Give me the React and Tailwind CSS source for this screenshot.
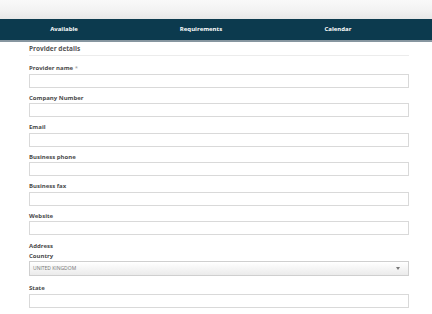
export default function App() {
  const fields1 = ["Company Number", "Email", "Business phone", "Business fax", "Website"];
  const font = { fontFamily: '"Open Sans", "Noto Sans", sans-serif' };
  return (
    <div className="w-[432px] h-[314px] bg-white overflow-hidden" style={font}>
      <div className="h-[19px] bg-gradient-to-b from-[#f9f9f9] via-[#f3f3f3] to-[#e7e7e7]" />
      <div className="h-[23px] bg-[#0c3a4e] flex items-center border-b-[2px] border-[#8796a0]">
        <div className="w-[128px] text-center text-white text-[6px] font-bold">Available</div>
        <div className="w-[146px] text-center text-white text-[6px] font-bold">Requirements</div>
        <div className="w-[128px] text-center text-white text-[6px] font-bold">Calendar</div>
      </div>
      <div className="ml-[29px] w-[380px]">
        <div className="h-[14px] flex items-center border-b border-[#ececec] text-[6.5px] font-bold text-[#555] leading-none pt-[1px]">
          Provider details
        </div>
        <div className="mt-[8px] flex flex-col gap-[6px]">
          <div>
            <div className="text-[6px] font-bold text-[#4a4a4a] leading-[9.5px]">
              Provider name <span className="text-[#999] font-normal">*</span>
            </div>
            <div className="h-[14px] border border-[#d9d9d9] bg-white" />
          </div>
          {fields1.map((f) => (
            <div key={f}>
              <div className="text-[6px] font-bold text-[#4a4a4a] leading-[9.5px]">{f}</div>
              <div className="h-[14px] border border-[#d9d9d9] bg-white" />
            </div>
          ))}
          <div>
            <div className="text-[6px] font-bold text-[#4a4a4a] leading-[10px]">Address</div>
            <div className="text-[6px] font-bold text-[#4a4a4a] leading-[10px]">Country</div>
            <div className="h-[15px] border border-[#cfcfcf] bg-gradient-to-b from-[#ffffff] to-[#ebebeb] flex items-center justify-between px-[3px]">
              <span className="text-[5px] text-[#777] uppercase">United Kingdom</span>
              <svg width="4" height="3" viewBox="0 0 4 3" className="mr-[5px]">
                <path d="M0 0 L4 0 L2 3 Z" fill="#777" />
              </svg>
            </div>
          </div>
          <div className="mt-[2px]">
            <div className="text-[6px] font-bold text-[#4a4a4a] leading-[9.5px]">State</div>
            <div className="h-[14px] border border-[#d9d9d9] bg-white" />
          </div>
        </div>
      </div>
    </div>
  );
}
